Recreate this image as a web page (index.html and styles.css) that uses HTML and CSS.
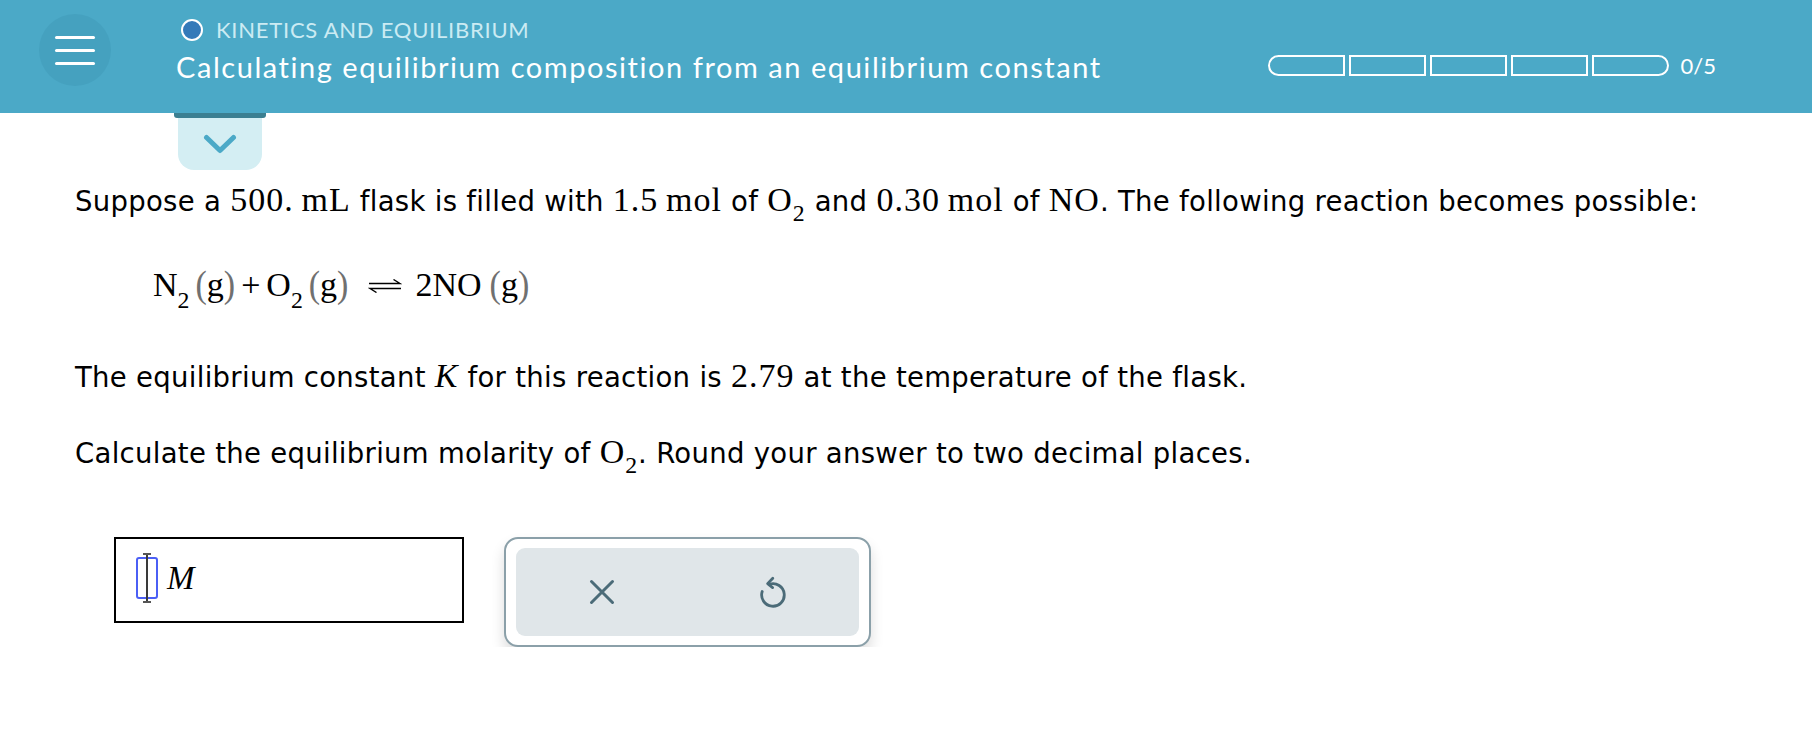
FILE: index.html
```html
<!DOCTYPE html>
<html lang="en">
<head>
<meta charset="utf-8">
<title>Calculating equilibrium composition from an equilibrium constant</title>
<link rel="stylesheet" href="styles.css">
</head>
<body>
<header class="topbar">
  <div class="menu-btn"><span></span><span></span><span></span></div>
  <div class="titles">
    <div class="topic"><span class="dot"></span><span class="topic-text">KINETICS AND EQUILIBRIUM</span></div>
    <div class="title">Calculating equilibrium composition from an equilibrium constant</div>
  </div>
  <div class="progress">
    <div class="segs">
      <span class="seg first"></span><span class="seg"></span><span class="seg"></span><span class="seg"></span><span class="seg last"></span>
    </div>
    <span class="count">0/5</span>
  </div>
</header>
<div class="tab">
  <div class="tab-band"></div>
  <div class="tab-body">
    <svg width="34" height="20" viewBox="0 0 34 20"><path d="M3.5 3.5 L17 16.5 L30.5 3.5" fill="none" stroke="#4ba9c7" stroke-width="5" stroke-linecap="round" stroke-linejoin="round"/></svg>
  </div>
</div>
<main class="content">
  <p class="para p1">Suppose a <span class="m">500.&thinsp;mL</span> flask is filled with <span class="m">1.5&thinsp;mol</span> of <span class="m">O<sub>2</sub></span> and <span class="m">0.30&thinsp;mol</span> of <span class="m">NO</span>. The following reaction becomes possible:</p>
  <div class="eq"><span class="m eqm">N<sub>2</sub><span class="paren pl">(</span>g<span class="paren">)</span><span class="op">+</span>O<sub>2</sub><span class="paren pl">(</span>g<span class="paren">)</span><span class="rel"><svg width="34" height="14" viewBox="0 0 34 14"><path d="M1 4.5 H32 L25.5 0.5 M33 9.5 H2 L8.5 13.5" fill="none" stroke="#000" stroke-width="1.4"/></svg></span>2NO<span class="paren pl pl-last">(</span>g<span class="paren">)</span></span></div>
  <p class="para p2">The equilibrium constant <span class="m"><i>K</i></span> for this reaction is <span class="m">2.79</span> at the temperature of the flask.</p>
  <p class="para p3">Calculate the equilibrium molarity of <span class="m">O<sub>2</sub></span>. Round your answer to two decimal places.</p>
  <div class="answer-row">
    <div class="answer-box">
      <span class="cursor"><span class="beam"></span></span>
      <span class="unit">M</span>
    </div>
    <div class="tools">
      <div class="tools-inner">
        <button class="tool" aria-label="Clear">
          <svg width="26" height="26" viewBox="0 0 26 26"><path d="M2.5 2.5 L23.5 23.5 M23.5 2.5 L2.5 23.5" fill="none" stroke="#4b6b78" stroke-width="3" stroke-linecap="round"/></svg>
        </button>
        <button class="tool" aria-label="Undo">
          <svg width="28" height="34" viewBox="0 0 28 34"><path d="M3.2 16.5 A11.3 11.3 0 1 0 10.5 9.2" fill="none" stroke="#4b6b78" stroke-width="2.8" stroke-linecap="round"/><path d="M13.8 3.2 L8.6 8.6 L13.6 12.6" fill="none" stroke="#4b6b78" stroke-width="2.8" stroke-linecap="round" stroke-linejoin="round"/></svg>
        </button>
      </div>
    </div>
  </div>
</main>
</body>
</html>
```

FILE: styles.css
```css
* { box-sizing: border-box; }

body {
  margin: 0;
  background: #ffffff;
  color: #000000;
  font-family: "DejaVu Sans", Verdana, sans-serif;
}

/* ---------- top bar ---------- */
.topbar {
  height: 113px;
  background: #4ba9c7;
  display: flex;
  align-items: flex-start;
  padding-left: 39px;
  padding-right: 96px;
}

.menu-btn {
  width: 72px;
  height: 72px;
  margin-top: 14px;
  border-radius: 50%;
  background: #45a1bf;
  display: flex;
  flex-direction: column;
  align-items: center;
  justify-content: center;
  gap: 10px;
}
.menu-btn span {
  width: 40px;
  height: 3px;
  border-radius: 2px;
  background: #ffffff;
}

.titles {
  margin-left: 65px;
  margin-top: 17px;
  font-family: Lato, "Open Sans", sans-serif;
}
.topic {
  display: flex;
  align-items: center;
  height: 26px;
}
.dot {
  width: 22px;
  height: 22px;
  margin-left: 5px;
  border-radius: 50%;
  border: 2px solid #ffffff;
  background: #347ab9;
}
.topic-text {
  margin-left: 13px;
  font-size: 22px;
  letter-spacing: 0.75px;
  line-height: 26px;
  color: #cbebf3;
}
.title {
  margin-top: 7px;
  font-size: 29px;
  letter-spacing: 1.55px;
  line-height: 34px;
  color: #ffffff;
}

.progress {
  margin-left: auto;
  margin-top: 55px;
  display: flex;
  align-items: center;
  font-family: Lato, "Open Sans", sans-serif;
}
.segs {
  display: flex;
  gap: 4px;
}
.seg {
  width: 77px;
  height: 21px;
  border: 2px solid #ffffff;
}
.seg.first { border-radius: 11px 0 0 11px; }
.seg.last { border-radius: 0 11px 11px 0; }
.count {
  margin-left: 12px;
  font-size: 22px;
  line-height: 21px;
  color: #ffffff;
}

/* ---------- drop tab ---------- */
.tab {
  width: 92px;
  margin-left: 174px;
}
.tab-band {
  height: 5px;
  background: #3b7f91;
  border-radius: 0 0 3px 3px;
}
.tab-body {
  width: 84px;
  height: 52px;
  margin-left: 4px;
  background: #d4eef3;
  border-radius: 0 0 16px 16px;
  display: flex;
  align-items: center;
  justify-content: center;
}
.tab-body svg { display: block; }

/* ---------- content ---------- */
.content {
  padding-left: 75px;
}
.para {
  margin: 0;
  font-size: 27.5px;
  letter-spacing: 0.3px;
  line-height: 40px;
}
.p1 { margin-top: 11px; }
.p2 { margin-top: 41px; }
.p3 { margin-top: 36px; }

.m {
  font-family: "Liberation Serif", "Times New Roman", serif;
  font-size: 34px;
  letter-spacing: 1px;
  line-height: 1;
}
.m sub {
  font-size: 0.7em;
  line-height: 0;
  vertical-align: -0.42em;
}
.m i { font-style: italic; }

.eq {
  margin-top: 45px;
  margin-left: 78px;
  height: 50px;
  line-height: 50px;
}
.eqm { letter-spacing: 0; }
.eqm sub { vertical-align: -0.5em; }
.paren {
  display: inline-block;
  color: #707070;
  transform: scaleY(1.12);
}
.paren.pl { margin-left: 6px; }
.paren.pl-last { margin-left: 8px; }
.op { margin: 0 6px 0 6px; }
.rel {
  display: inline-block;
  margin: 0 13px 0 20px;
  vertical-align: 3px;
}
.rel svg { display: block; }

/* ---------- answer row ---------- */
.answer-row {
  margin-top: 64px;
  margin-left: 39px;
  display: flex;
  align-items: flex-start;
}
.answer-box {
  width: 350px;
  height: 86px;
  border: 2px solid #000000;
  display: flex;
  align-items: center;
  padding-left: 20px;
}
.cursor {
  position: relative;
  width: 22px;
  height: 42px;
  border: 2px solid #4b5ff5;
  border-radius: 3px;
  margin-top: -4px;
}
.beam {
  position: absolute;
  left: 8px;
  top: -6px;
  width: 2px;
  height: 50px;
  background: #3a3a3a;
}
.beam::before,
.beam::after {
  content: "";
  position: absolute;
  left: -3px;
  width: 8px;
  height: 2px;
  background: #555555;
}
.beam::before { top: 0; }
.beam::after { bottom: 0; }
.unit {
  margin-left: 9px;
  font-family: "Liberation Serif", "Times New Roman", serif;
  font-style: italic;
  font-size: 33px;
  line-height: 1;
  margin-top: -4px;
}

.tools {
  margin-left: 40px;
  width: 367px;
  height: 110px;
  border: 2px solid #8ba0a9;
  border-radius: 14px;
  padding: 9px 10px;
  background: #ffffff;
  box-shadow: 0 8px 14px rgba(0, 0, 0, 0.14);
}
.tools-inner {
  height: 100%;
  background: #e0e6e9;
  border-radius: 9px;
  display: flex;
}
.tool {
  flex: 1;
  border: 0;
  background: transparent;
  padding: 0;
  display: flex;
  align-items: center;
  justify-content: center;
}
.tool svg { display: block; }
```
